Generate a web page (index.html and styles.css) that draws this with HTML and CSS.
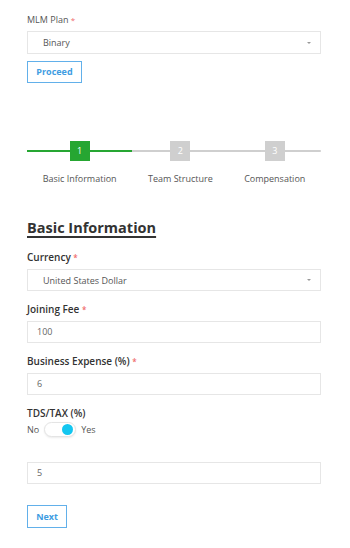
FILE: index.html
```html
<!DOCTYPE html>
<html>
<head>
<meta charset="utf-8">
<link rel="stylesheet" href="styles.css">
</head>
<body>
<div class="page">
  <div class="plan">
    <div class="label-light">MLM Plan <span class="req">*</span></div>
    <div class="select select-plan"><span>Binary</span><span class="caret"></span></div>
    <button class="btn btn-proceed">Proceed</button>
  </div>

  <div class="stepper">
    <div class="step done">
      <div class="track"><span class="num">1</span></div>
      <div class="step-label">Basic Information</div>
    </div>
    <div class="step">
      <div class="track"><span class="num">2</span></div>
      <div class="step-label">Team Structure</div>
    </div>
    <div class="step">
      <div class="track"><span class="num">3</span></div>
      <div class="step-label">Compensation</div>
    </div>
  </div>

  <h2 class="section-title">Basic Information</h2>

  <div class="group g-currency">
    <div class="label">Currency <span class="req">*</span></div>
    <div class="select"><span>United States Dollar</span><span class="caret"></span></div>
  </div>

  <div class="group">
    <div class="label">Joining Fee <span class="req">*</span></div>
    <div class="input">100</div>
  </div>

  <div class="group">
    <div class="label">Business Expense (%) <span class="req">*</span></div>
    <div class="input">6</div>
  </div>

  <div class="group">
    <div class="label">TDS/TAX (%)</div>
    <div class="toggle-row">
      <span>No</span>
      <span class="switch"><span class="knob"></span></span>
      <span>Yes</span>
    </div>
  </div>

  <div class="input input-tax">5</div>

  <button class="btn btn-next">Next</button>
</div>
</body>
</html>
```
FILE: styles.css
```css
html, body {
  margin: 0;
  padding: 0;
  background: #fff;
}
body {
  font-family: "Open Sans", "DejaVu Sans", sans-serif;
  color: #444;
}
.page {
  width: 294px;
  padding: 13px 0 0 27px;
}
.label-light {
  font-size: 9px;
  line-height: 14px;
  height: 14px;
  color: #555;
}
.req {
  color: #ef6b6b;
  font-size: 8px;
  line-height: 1;
}
.select {
  box-sizing: border-box;
  height: 23px;
  border: 1px solid #e6e6e6;
  display: flex;
  align-items: center;
  justify-content: space-between;
  padding: 0 9px 0 15px;
  font-size: 9px;
  color: #555;
}
.select-plan {
  margin-top: 4px;
}
.caret {
  width: 0;
  height: 0;
  border-left: 2.5px solid transparent;
  border-right: 2.5px solid transparent;
  border-top: 2.5px solid #999;
}
.btn {
  box-sizing: border-box;
  display: block;
  background: #fff;
  border: 1px solid #62b0ea;
  color: #3f9de2;
  font-family: "Open Sans", "DejaVu Sans", sans-serif;
  font-weight: 700;
  font-size: 9px;
  height: 22px;
  line-height: 20px;
  padding: 0;
  margin: 0;
}
.btn-proceed {
  margin-top: 7px;
  width: 55px;
}
.stepper {
  display: flex;
  margin-top: 58px;
}
.step {
  flex: 1 1 auto;
  display: flex;
  flex-direction: column;
  align-items: center;
}
.track {
  align-self: stretch;
  height: 20px;
  display: flex;
  justify-content: center;
  align-items: center;
  background: linear-gradient(#cfcfcf, #cfcfcf) center / 100% 2px no-repeat;
}
.step.done .track {
  background: linear-gradient(#26a632, #26a632) center / 100% 2px no-repeat;
}
.num {
  width: 20px;
  height: 20px;
  background: #cfcfcf;
  color: #fff;
  font-size: 9px;
  line-height: 20px;
  text-align: center;
}
.step.done .num {
  background: #26a632;
}
.step-label {
  margin-top: 11px;
  font-size: 9px;
  line-height: 14px;
  color: #555;
  white-space: nowrap;
}
.section-title {
  margin: 32px 0 0 0;
  font-size: 14.5px;
  line-height: 20px;
  font-weight: 700;
  color: #333;
  text-decoration: underline;
  text-underline-offset: 3px;
  text-decoration-thickness: 1.5px;
}
.group {
  margin-top: 11px;
}
.g-currency {
  margin-top: 12px;
}
.label {
  font-size: 10px;
  line-height: 14px;
  height: 14px;
  font-weight: 600;
  color: #333;
}
.group .select, .group .input {
  margin-top: 5px;
}
.g-currency .select {
  height: 22px;
}
.input {
  box-sizing: border-box;
  height: 22px;
  border: 1px solid #e6e6e6;
  padding: 0 9px;
  font-size: 9px;
  line-height: 20px;
  color: #666;
}
.toggle-row {
  display: flex;
  align-items: center;
  gap: 4px;
  margin-top: 1px;
  height: 16px;
  font-size: 9px;
  color: #555;
}
.switch {
  box-sizing: border-box;
  width: 32px;
  height: 15px;
  border-radius: 8px;
  border: 1px solid #e4e4e4;
  box-shadow: 0 1px 2px rgba(0,0,0,0.08);
  background: #fff;
  display: flex;
  justify-content: flex-end;
  align-items: center;
  padding-right: 2px;
  margin: 0 1px;
}
.knob {
  width: 11px;
  height: 11px;
  border-radius: 50%;
  background: #13c6f0;
}
.input-tax {
  margin-top: 25px;
}
.btn-next {
  margin-top: 21px;
  width: 40px;
  height: 23px;
}
```
